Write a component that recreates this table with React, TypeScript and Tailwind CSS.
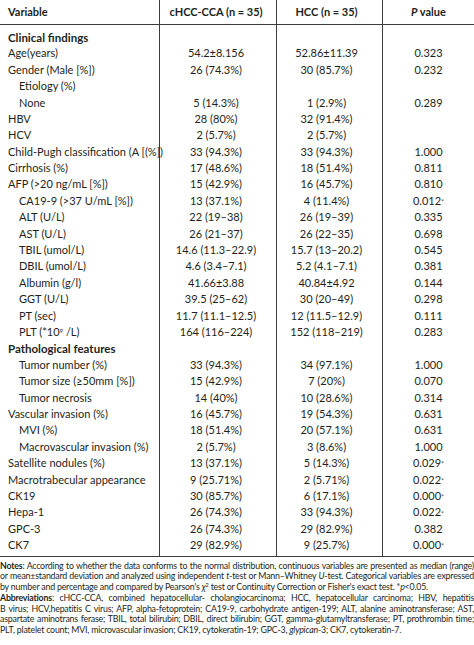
import React from "react";

type Row = {
  label: React.ReactNode;
  indent?: boolean;
  bold?: boolean;
  a?: string;
  b?: string;
  p?: string;
};

const rows: Row[] = [
  { label: "Clinical findings", bold: true },
  { label: "Age(years)", a: "54.2±8.156", b: "52.86±11.39", p: "0.323" },
  { label: "Gender (Male [%])", a: "26 (74.3%)", b: "30 (85.7%)", p: "0.232" },
  { label: "Etiology (%)", indent: true },
  { label: "None", indent: true, a: "5 (14.3%)", b: "1 (2.9%)", p: "0.289" },
  { label: "HBV", a: "28 (80%)", b: "32 (91.4%)" },
  { label: "HCV", a: "2 (5.7%)", b: "2 (5.7%)" },
  { label: "Child-Pugh classification (A [(%])", a: "33 (94.3%)", b: "33 (94.3%)", p: "1.000" },
  { label: "Cirrhosis (%)", a: "17 (48.6%)", b: "18 (51.4%)", p: "0.811" },
  { label: "AFP (>20 ng/mL [%])", a: "15 (42.9%)", b: "16 (45.7%)", p: "0.810" },
  { label: "CA19-9 (>37 U/mL [%])", indent: true, a: "13 (37.1%)", b: "4 (11.4%)", p: "0.012*" },
  { label: "ALT (U/L)", indent: true, a: "22 (19–38)", b: "26 (19–39)", p: "0.335" },
  { label: "AST (U/L)", indent: true, a: "26 (21–37)", b: "26 (22–35)", p: "0.698" },
  { label: "TBIL (umol/L)", indent: true, a: "14.6 (11.3–22.9)", b: "15.7 (13–20.2)", p: "0.545" },
  { label: "DBIL (umol/L)", indent: true, a: "4.6 (3.4–7.1)", b: "5.2 (4.1–7.1)", p: "0.381" },
  { label: "Albumin (g/l)", indent: true, a: "41.66±3.88", b: "40.84±4.92", p: "0.144" },
  { label: "GGT (U/L)", indent: true, a: "39.5 (25–62)", b: "30 (20–49)", p: "0.298" },
  { label: "PT (sec)", indent: true, a: "11.7 (11.1–12.5)", b: "12 (11.5–12.9)", p: "0.111" },
  {
    label: (
      <>
        PLT (*10<sup className="text-[6px] relative -top-[1px]">9</sup>&nbsp;/L)
      </>
    ),
    indent: true,
    a: "164 (116–224)",
    b: "152 (118–219)",
    p: "0.283",
  },
  { label: "Pathological features", bold: true },
  { label: "Tumor number (%)", indent: true, a: "33 (94.3%)", b: "34 (97.1%)", p: "1.000" },
  { label: "Tumor size (≥50mm [%])", indent: true, a: "15 (42.9%)", b: "7 (20%)", p: "0.070" },
  { label: "Tumor necrosis", indent: true, a: "14 (40%)", b: "10 (28.6%)", p: "0.314" },
  { label: "Vascular invasion (%)", a: "16 (45.7%)", b: "19 (54.3%)", p: "0.631" },
  { label: "MVI (%)", indent: true, a: "18 (51.4%)", b: "20 (57.1%)", p: "0.631" },
  { label: "Macrovascular invasion (%)", indent: true, a: "2 (5.7%)", b: "3 (8.6%)", p: "1.000" },
  { label: "Satellite nodules (%)", a: "13 (37.1%)", b: "5 (14.3%)", p: "0.029*" },
  { label: "Macrotrabecular appearance", a: "9 (25.71%)", b: "2 (5.71%)", p: "0.022*" },
  { label: "CK19", a: "30 (85.7%)", b: "6 (17.1%)", p: "0.000*" },
  { label: "Hepa-1", a: "26 (74.3%)", b: "33 (94.3%)", p: "0.022*" },
  { label: "GPC-3", a: "26 (74.3%)", b: "29 (82.9%)", p: "0.382" },
  { label: "CK7", a: "29 (82.9%)", b: "9 (25.7%)", p: "0.000*" },
];

function PVal({ v }: { v?: string }) {
  if (!v) return null;
  if (v.endsWith("*")) {
    return (
      <>
        {v.slice(0, -1)}
        <sup className="text-[7px] relative top-[1px] text-[#555]">*</sup>
      </>
    );
  }
  return <>{v}</>;
}

const J = "whitespace-nowrap [text-align:justify] [text-align-last:justify] h-[10.8px] leading-[10.8px]";
const L = "whitespace-nowrap h-[10.8px] leading-[10.8px]";

export default function App() {
  return (
    <div
      className="w-[474px] h-[645px] bg-white text-[#231f20] overflow-hidden"
      style={{ fontFamily: "Lato, 'Open Sans', sans-serif" }}
    >
      <div className="text-[11px]">
        {/* header */}
        <div className="flex h-[25px] border-b border-[#3c3c3c] font-bold">
          <div className="w-[160px] border-r border-[#3c3c3c] pl-[8px] flex items-center">Variable</div>
          <div className="w-[117px] border-r border-[#3c3c3c] flex items-center justify-center pr-[4px]">
            cHCC-CCA (n = 35)
          </div>
          <div className="w-[106px] border-r border-[#3c3c3c] flex items-center justify-center pr-[6px]">
            HCC (n = 35)
          </div>
          <div className="flex-1 flex items-center justify-center">
            <span>
              <i>P</i> value
            </span>
          </div>
        </div>
        {/* body */}
        <div className="flex flex-col border-b border-[#3c3c3c]">
          <div className="flex h-[4px]">
            <div className="w-[160px] border-r border-[#3c3c3c]" />
            <div className="w-[117px] border-r border-[#3c3c3c]" />
            <div className="w-[106px] border-r border-[#3c3c3c]" />
            <div className="flex-1" />
          </div>
          {rows.map((r, i) => (
            <div key={i} className="flex h-[16.4px] items-center">
              <div
                className={`w-[160px] h-full border-r border-[#3c3c3c] flex items-center whitespace-nowrap ${
                  r.indent ? "pl-[19px]" : "pl-[8px]"
                } ${r.bold ? "font-bold text-[11.5px]" : ""}`}
              >
                {r.label}
              </div>
              <div className="w-[117px] h-full border-r border-[#3c3c3c] flex items-center justify-center pr-[4px] whitespace-nowrap">
                {r.a}
              </div>
              <div className="w-[106px] h-full border-r border-[#3c3c3c] flex items-center justify-center pr-[6px] whitespace-nowrap">
                {r.b}
              </div>
              <div className="flex-1 h-full flex items-center justify-center whitespace-nowrap">
                <PVal v={r.p} />
              </div>
            </div>
          ))}
          <div className="flex h-[2px]">
            <div className="w-[160px] border-r border-[#3c3c3c]" />
            <div className="w-[117px] border-r border-[#3c3c3c]" />
            <div className="w-[106px] border-r border-[#3c3c3c]" />
            <div className="flex-1" />
          </div>
        </div>
      </div>
      {/* notes */}
      <div className="pt-[4px] text-[8.8px] tracking-[-0.2px]">
        <div className={J}>
          <b>Notes</b>: According to whether the data conforms to the normal distribution, continuous variables are presented as median (range)
        </div>
        <div className={J}>
          or mean±standard deviation and analyzed using independent <i>t</i>-test or Mann–Whitney <i>U</i>-test. Categorical variables are expressed
        </div>
        <div className={L}>
          by number and percentage and compared by Pearson's <i>χ</i>
          <sup className="text-[6px]">2</sup> test or Continuity Correction or Fisher's exact test. *<i>p</i>&lt;0.05.
        </div>
        <div className={J}>
          <b>Abbreviations</b>: cHCC-CCA, combined hepatocellular- cholangiocarcinoma; HCC, hepatocellular carcinoma; HBV, hepatitis
        </div>
        <div className={J}>
          B virus; HCV,hepatitis C virus; AFP, alpha-fetoprotein; CA19-9, carbohydrate antigen-199; ALT, alanine aminotransferase; AST,
        </div>
        <div className={J}>
          aspartate aminotrans ferase; TBIL, total bilirubin; DBIL, direct bilirubin; GGT, gamma-glutamyltransferase; PT, prothrombin time;
        </div>
        <div className={L}>
          PLT, platelet count; MVI, microvascular invasion; CK19, cytokeratin-19; GPC-3, <i>glypican</i>-3; CK7, cytokeratin-7.
        </div>
      </div>
    </div>
  );
}
